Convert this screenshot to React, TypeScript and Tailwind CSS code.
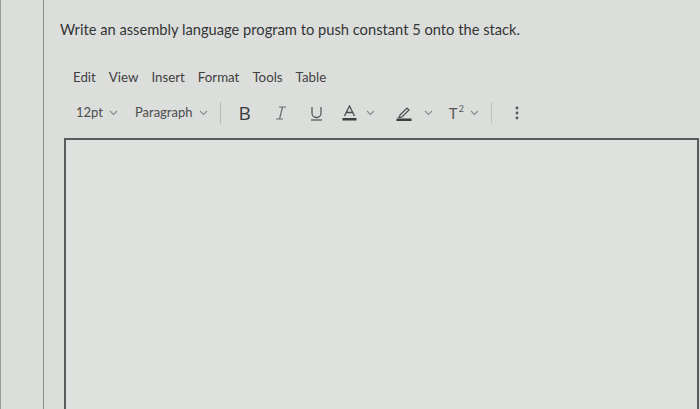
import React from "react";

const Chevron = () => (
  <svg width="9" height="6" viewBox="0 0 9 6" className="ml-[6px]">
    <path d="M1 1 L4.5 4.5 L8 1" fill="none" stroke="#8a8c8c" strokeWidth="1.1" />
  </svg>
);

export default function App() {
  return (
    <div
      className="w-[700px] h-[409px] overflow-hidden bg-[#dcdedc] flex border-l border-[#9a9c9c]"
      style={{ fontFamily: "Lato, 'Open Sans', sans-serif" }}
    >
      <div className="w-[43px] shrink-0 border-r border-[#8e9090]" />
      <div className="flex-1 flex flex-col">
        <div className="pl-[16px] pt-[18px] h-[52px] text-[14.7px] text-[#333535]">
          Write an assembly language program to push constant 5 onto the stack.
        </div>
        <div className="pl-[29px] mt-[16px] flex items-center gap-[13px] text-[13.3px] text-[#3f4141] h-[20px]">
          <span>Edit</span>
          <span>View</span>
          <span>Insert</span>
          <span>Format</span>
          <span>Tools</span>
          <span>Table</span>
        </div>
        <div className="pl-[32px] mt-[14px] h-[22px] flex items-center text-[13px] text-[#4a4c4c]">
          <span className="flex items-center">12pt<Chevron /></span>
          <span className="flex items-center ml-[17px]">Paragraph<Chevron /></span>
          <div className="w-px h-[22px] bg-[#b8baba] ml-[12px]" />
          <span className="ml-[18px] text-[19px] font-medium text-[#3a3c3c]" style={{ fontFamily: "'Open Sans', sans-serif" }}>B</span>
          <svg width="12" height="14" viewBox="0 0 12 14" className="ml-[24px]">
            <path d="M4 1 H11 M1 13 H8 M7.5 1 L4.5 13" stroke="#6a6c6c" strokeWidth="1.2" fill="none" />
          </svg>
          <svg width="13" height="15" viewBox="0 0 13 15" className="ml-[23px]">
            <path d="M2 1 V7 A4.5 4.5 0 0 0 11 7 V1" stroke="#5a5c5c" strokeWidth="1.3" fill="none" />
            <path d="M1 14 H12" stroke="#5a5c5c" strokeWidth="1.3" />
          </svg>
          <span className="ml-[19px] flex items-center">
            <svg width="15" height="16" viewBox="0 0 15 16">
              <path d="M2.5 11 L7.5 1 L12.5 11 M4.2 7.5 H10.8" stroke="#4a4c4c" strokeWidth="1.3" fill="none" />
              <rect x="0.5" y="13" width="14" height="2.5" fill="#3e4040" />
            </svg>
            <span className="ml-[3px]"><Chevron /></span>
          </span>
          <span className="ml-[21px] flex items-center">
            <svg width="16" height="16" viewBox="0 0 16 16">
              <path d="M4 10 L11 3 L13 5 L6 12 L3.5 12.5 Z" stroke="#4a4c4c" strokeWidth="1.2" fill="none" />
              <path d="M3.5 12.5 L2 12" stroke="#4a4c4c" strokeWidth="1.2" />
              <rect x="0.5" y="13.5" width="15" height="2.5" fill="#3e4040" />
            </svg>
            <span className="ml-[6px]"><Chevron /></span>
          </span>
          <span className="ml-[16px] flex items-center text-[15px] text-[#555757]">
            T<sup className="text-[9px] ml-[1px] relative -top-[4px]">2</sup>
            <Chevron />
          </span>
          <div className="w-px h-[22px] bg-[#c0c2c2] ml-[12px]" />
          <svg width="4" height="14" viewBox="0 0 4 14" className="ml-[23px]">
            <circle cx="2" cy="2" r="1.4" fill="#555757" />
            <circle cx="2" cy="7" r="1.4" fill="#555757" />
            <circle cx="2" cy="12" r="1.4" fill="#555757" />
          </svg>
        </div>
        <div className="ml-[20px] mr-[1px] mt-[14px] flex-1 border-l-2 border-t-2 border-r-2 border-[#5a5c5c] bg-[#dfe1df]" />
      </div>
    </div>
  );
}
